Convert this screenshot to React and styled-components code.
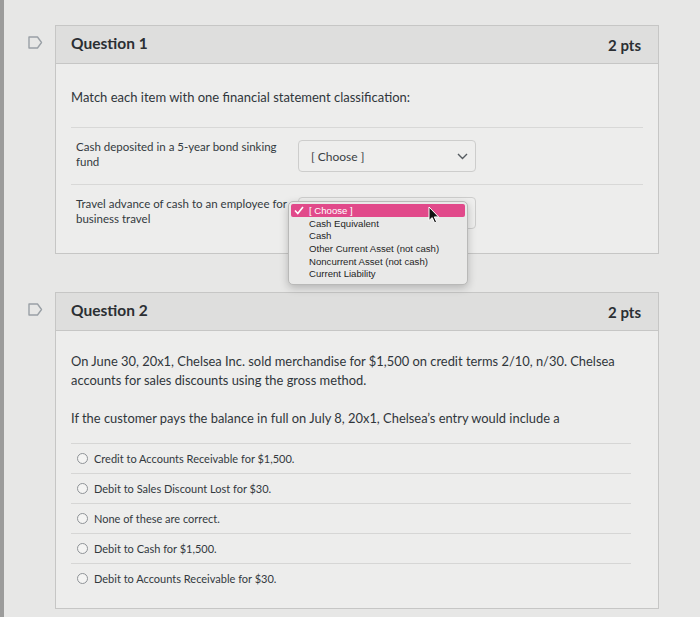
import React from "react";
import styled, { createGlobalStyle } from "styled-components";

const Global = createGlobalStyle`
  html, body { margin: 0; padding: 0; }
  body {
    background: #e7e7e6;
    font-family: Lato, "Open Sans", "Liberation Sans", sans-serif;
    color: #2d3b45;
  }
`;

const Page = styled.div`
  min-height: 617px;
  box-sizing: border-box;
  border-left: 4px solid #9c9c9b;
  padding-top: 25px;
  display: flex;
  flex-direction: column;
  gap: 38px;
`;

const QuestionRow = styled.div`
  display: flex;
  align-items: flex-start;
  padding-left: 24px;
  gap: 12px;
`;

const Flag = styled.svg`
  flex: none;
  margin-top: 11px;
`;

const Card = styled.div`
  width: 604px;
  border: 1px solid #c6c6c5;
  background: #ededec;
  box-sizing: border-box;
`;

const Header = styled.div`
  height: 38px;
  box-sizing: border-box;
  background: #dededd;
  border-bottom: 1px solid #c6c6c5;
  display: flex;
  align-items: center;
  justify-content: space-between;
  padding: 0 17px 0 15px;
`;

const Title = styled.div`
  font-size: 15.5px;
  font-weight: 700;
  color: #2b2f33;
  margin-top: ${(p) => p.$shift || 0}px;
`;

const Points = styled.div`
  font-size: 15px;
  font-weight: 700;
  color: #2b2f33;
  margin-top: ${(p) => p.$shift || 0}px;
`;

const Body = styled.div`
  padding: ${(p) => p.$top}px 15px ${(p) => p.$bottom}px 15px;
`;

const Para = styled.p`
  margin: 0 0 ${(p) => p.$gap || 0}px 0;
  font-size: ${(p) => p.$size || 13}px;
  line-height: ${(p) => p.$lh || 20}px;
  color: #30363b;
  max-width: ${(p) => p.$max || 560}px;
`;

const MatchList = styled.div`
  display: flex;
  flex-direction: column;
`;

const MatchRow = styled.div`
  display: flex;
  align-items: flex-start;
  gap: 8px;
  padding: 12px 0 12px 5px;
  border-top: 1px solid #d8d8d7;
  position: relative;
`;

const MatchText = styled.div`
  width: 214px;
  font-size: 11.5px;
  line-height: 15px;
  color: #333a40;
  margin-top: -1px;
`;

const SelectBox = styled.div`
  position: relative;
  width: 178px;
  height: 32px;
  box-sizing: border-box;
  border: 1px solid #cdcdcc;
  border-radius: 4px;
  background: #eeeeed;
  display: flex;
  align-items: center;
  justify-content: space-between;
  padding: 0 7px 0 12px;
  font-size: 12px;
  color: #3a3f44;
`;

const SelectLabel = styled.span`
  visibility: ${(p) => (p.$covered ? "hidden" : "visible")};
`;

const Menu = styled.div`
  position: absolute;
  left: -11px;
  top: 3px;
  width: 180px;
  box-sizing: border-box;
  padding: 2px 2px 4px 2px;
  background: #e9e9e8;
  border: 1px solid #b9b9b8;
  border-radius: 5px;
  box-shadow: 0 3px 8px rgba(0, 0, 0, 0.22);
  z-index: 5;
`;

const MenuItem = styled.div`
  height: 12.6px;
  display: flex;
  align-items: center;
  padding-left: 18px;
  position: relative;
  font-family: "Liberation Sans", Arial, sans-serif;
  font-size: 9.6px;
  color: ${(p) => (p.$active ? "#ffffff" : "#1f1f1f")};
  background: ${(p) => (p.$active ? "#e1498a" : "transparent")};
  border-radius: ${(p) => (p.$active ? "2px" : "0")};
  margin-bottom: ${(p) => (p.$active ? "0.5px" : "0")};
`;

const Check = styled.svg`
  position: absolute;
  left: 3px;
  top: 2px;
`;

const Cursor = styled.svg`
  position: absolute;
  left: 139px;
  top: 4px;
  z-index: 6;
`;

const AnswerList = styled.div`
  display: flex;
  flex-direction: column;
  margin-top: 15px;
`;

const Answer = styled.label`
  height: 30px;
  box-sizing: border-box;
  border-top: 1px solid #d6d6d5;
  display: flex;
  align-items: center;
  gap: 6px;
  padding-left: 6px;
  font-size: 11px;
  color: #33393e;
  margin-right: 12px;
`;

const Radio = styled.span`
  width: 9px;
  height: 9px;
  border-radius: 50%;
  border: 1.3px solid #8f9397;
  background: #f4f4f3;
  flex: none;
`;

const FlagIcon = () => (
  <Flag width="15" height="13" viewBox="0 0 15 13">
    <path d="M1 1 H9.5 L13.5 6.5 L9.5 12 H1 Z" fill="none" stroke="#9aa0a6" strokeWidth="1.4" strokeLinejoin="round" />
  </Flag>
);

const Chevron = () => (
  <svg width="11" height="7" viewBox="0 0 11 7">
    <polyline points="1,1 5.5,5.5 10,1" fill="none" stroke="#555b60" strokeWidth="1.4" />
  </svg>
);

const options = [
  "Cash Equivalent",
  "Cash",
  "Other Current Asset (not cash)",
  "Noncurrent Asset (not cash)",
  "Current Liability",
];

const answers = [
  "Credit to Accounts Receivable for $1,500.",
  "Debit to Sales Discount Lost for $30.",
  "None of these are correct.",
  "Debit to Cash for $1,500.",
  "Debit to Accounts Receivable for $30.",
];

export default function App() {
  return (
    <>
      <Global />
      <Page>
        <QuestionRow>
          <FlagIcon />
          <Card>
            <Header>
              <Title $shift={-3}>Question 1</Title>
              <Points $shift={1}>2 pts</Points>
            </Header>
            <Body $top={23} $bottom={12}>
              <Para $gap={20}>Match each item with one financial statement classification:</Para>
              <MatchList>
                <MatchRow>
                  <MatchText>Cash deposited in a 5-year bond sinking fund</MatchText>
                  <SelectBox>
                    <SelectLabel>[ Choose ]</SelectLabel>
                    <Chevron />
                  </SelectBox>
                </MatchRow>
                <MatchRow>
                  <MatchText>Travel advance of cash to an employee for business travel</MatchText>
                  <SelectBox>
                    <SelectLabel $covered>[ Choose ]</SelectLabel>
                    <Chevron />
                    <Menu>
                      <MenuItem $active>
                        <Check width="10" height="9" viewBox="0 0 10 9">
                          <polyline points="1,4.5 3.8,7.5 9,1" fill="none" stroke="#ffffff" strokeWidth="1.6" />
                        </Check>
                        [ Choose ]
                      </MenuItem>
                      {options.map((o) => (
                        <MenuItem key={o}>{o}</MenuItem>
                      ))}
                      <Cursor width="12" height="18" viewBox="0 0 12 18">
                        <path d="M1 1 L1 14.5 L4.2 11.6 L6.6 16.8 L8.6 15.9 L6.3 10.9 L10.6 10.9 Z" fill="#111" stroke="#fff" strokeWidth="1" strokeLinejoin="round" />
                      </Cursor>
                    </Menu>
                  </SelectBox>
                </MatchRow>
              </MatchList>
            </Body>
          </Card>
        </QuestionRow>

        <QuestionRow>
          <FlagIcon />
          <Card>
            <Header>
              <Title $shift={-4}>Question 2</Title>
              <Points $shift={1}>2 pts</Points>
            </Header>
            <Body $top={21} $bottom={15}>
              <Para $size={12.9} $lh={19} $gap={19} $max={560}>
                On June 30, 20x1, Chelsea Inc. sold merchandise for $1,500 on credit terms 2/10, n/30. Chelsea accounts for sales discounts using the gross method.
              </Para>
              <Para $size={12.9} $lh={19}>
                If the customer pays the balance in full on July 8, 20x1, Chelsea’s entry would include a
              </Para>
              <AnswerList>
                {answers.map((a) => (
                  <Answer key={a}>
                    <Radio />
                    {a}
                  </Answer>
                ))}
              </AnswerList>
            </Body>
          </Card>
        </QuestionRow>
      </Page>
    </>
  );
}
